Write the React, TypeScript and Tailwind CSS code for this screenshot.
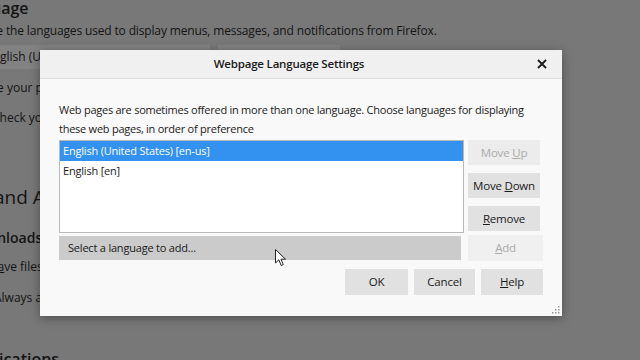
import React from 'react'

function Btn({ children, disabled, className = '' }: { children: React.ReactNode; disabled?: boolean; className?: string }) {
  return (
    <div
      className={
        'flex items-center justify-center text-[11.5px] tracking-[-0.2px] ' +
        (disabled ? 'bg-[#ececec] text-[#aaaaaa] ' : 'bg-[#e1e1e1] text-[#1a1a1a] ') +
        className
      }
    >
      <span>{children}</span>
    </div>
  )
}

export default function App() {
  return (
    <div className="relative w-[640px] h-[360px] overflow-hidden bg-[#787878] font-['Open_Sans',sans-serif] text-[#141414]">
      {/* settings page behind the dim overlay */}
      <div className="flex flex-col whitespace-nowrap">
        <div className="-ml-[46px] h-[16px] leading-[16px] text-[16px] font-semibold">Language</div>
        <div className="-ml-[38px] mt-[6px] text-[12px] tracking-[-0.15px] leading-[18px]">
          Choose the languages used to display menus, messages, and notifications from Firefox.
        </div>
        <div className="mt-[5px] flex gap-[8px]">
          <div className="w-[210px] h-[24px] bg-[#828282] flex items-center text-[12px]">
            <span className="-ml-[14px]">English (United States)</span>
          </div>
          <div className="w-[122px] h-[24px] bg-[#828282]" />
        </div>
        <div className="-ml-[38px] mt-[10px] text-[12px] leading-[18px]">Choose your preferred language for displaying pages</div>
        <div className="-ml-[8px] mt-[12px] text-[12px] leading-[18px]">Check your spelling as you type</div>
        <div className="-ml-[50px] mt-[58px] text-[19px] leading-[24px]">Files and Applications</div>
        <div className="-ml-[33px] mt-[19px] text-[14px] leading-[20px] font-semibold">Downloads</div>
        <div className="-ml-[9px] mt-[10px] text-[12px] leading-[18px]">
          S<u>a</u>ve files to
        </div>
        <div className="-ml-[6px] mt-[13px] text-[12px] leading-[18px]">Always ask you where to save files</div>
        <div className="-ml-[36px] mt-[42px] text-[16px] leading-[20px] font-semibold">Applications</div>
      </div>

      {/* dialog */}
      <div className="absolute left-[40px] top-[50px] w-[522px] h-[266px] bg-[#f9f9f9] shadow-[0_2px_10px_rgba(0,0,0,0.35)] flex flex-col">
        <div className="h-[29px] shrink-0 bg-[#f0f0f0] border-b border-[#dedede] flex items-center pl-[2px] pr-[10px]">
          <div className="flex-1 text-center text-[11.5px] tracking-[-0.2px] font-semibold text-[#1a1a1a]">Webpage Language Settings</div>
          <svg width="12" height="12" viewBox="0 0 12 12" className="mr-[4px]">
            <path d="M2 2 L10 10 M10 2 L2 10" stroke="#1a1a1a" strokeWidth="1.8" />
          </svg>
        </div>

        <div className="flex flex-col px-[19px] pt-[21px]">
          <div className="text-[11px] tracking-[-0.25px] leading-[19px] text-[#1a1a1a]">
            Web pages are sometimes offered in more than one language. Choose languages for displaying these web pages, in order of preference
          </div>

          <div className="mt-[2px] flex gap-[4px]">
            <div className="w-[405px] h-[93px] bg-white border border-[#b9b9b9] text-[11px] tracking-[-0.2px]">
              <div className="h-[20px] bg-[#3391ef] text-white flex items-center pl-[3px]">English (United States) [en-us]</div>
              <div className="h-[20px] flex items-center pl-[3px] text-[#1a1a1a]">English [en]</div>
            </div>
            <div className="flex flex-col gap-[8px]">
              <Btn disabled className="w-[72px] h-[25px]">
                Move <u>U</u>p
              </Btn>
              <Btn className="w-[72px] h-[25px]">
                Move <u>D</u>own
              </Btn>
              <Btn className="w-[72px] h-[25px]">
                <u>R</u>emove
              </Btn>
            </div>
          </div>

          <div className="mt-[2px] flex items-center gap-[7px]">
            <div className="w-[402px] h-[24px] bg-[#cbcbcb] flex items-center pl-[9px] text-[11px] tracking-[-0.2px] text-[#1a1a1a]">
              Select a language to add...
            </div>
            <Btn disabled className="w-[75px] h-[26px] bg-[#f0f0f0]">
              <u>A</u>dd
            </Btn>
          </div>

          <div className="mt-[8px] flex justify-end gap-[6px]">
            <Btn className="w-[63px] h-[26px]">OK</Btn>
            <Btn className="w-[61px] h-[26px]">Cancel</Btn>
            <Btn className="w-[62px] h-[26px]">
              <u>H</u>elp
            </Btn>
          </div>
        </div>

        {/* resize grip */}
        <svg width="8" height="8" viewBox="0 0 8 8" className="absolute right-[2px] bottom-[2px]">
          <rect x="6" y="0" width="1.5" height="1.5" fill="#9a9a9a" />
          <rect x="3" y="3" width="1.5" height="1.5" fill="#9a9a9a" />
          <rect x="6" y="3" width="1.5" height="1.5" fill="#9a9a9a" />
          <rect x="0" y="6" width="1.5" height="1.5" fill="#9a9a9a" />
          <rect x="3" y="6" width="1.5" height="1.5" fill="#9a9a9a" />
          <rect x="6" y="6" width="1.5" height="1.5" fill="#9a9a9a" />
        </svg>
      </div>

      {/* mouse pointer */}
      <svg width="12" height="18" viewBox="0 0 12 18" className="absolute left-[275px] top-[249px]">
        <path d="M0.5 0.5 L0.5 14 L3.8 10.8 L6.2 16.5 L8.3 15.6 L6 10.2 L10.5 10.2 Z" fill="white" stroke="#222" strokeWidth="1" strokeLinejoin="round" />
      </svg>
    </div>
  )
}
